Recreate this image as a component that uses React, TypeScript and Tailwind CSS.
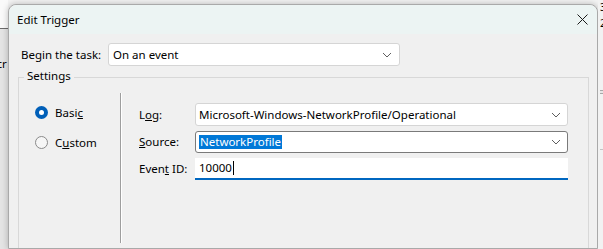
import React from "react";

function Chevron() {
  return (
    <svg width="10" height="6" viewBox="0 0 10 6" className="shrink-0">
      <path d="M1 1 L5 5 L9 1" fill="none" stroke="#5f5f5f" strokeWidth="1" />
    </svg>
  );
}

function Radio({ checked, children }: { checked?: boolean; children: React.ReactNode }) {
  return (
    <div className="flex items-center gap-[7px]">
      {checked ? (
        <span className="flex h-[13px] w-[13px] items-center justify-center rounded-full bg-[#005fb8]">
          <span className="h-[5px] w-[5px] rounded-full bg-white" />
        </span>
      ) : (
        <span className="h-[13px] w-[13px] rounded-full border border-[#8a8a8a] bg-[#f6f6f6]" />
      )}
      <span>{children}</span>
    </div>
  );
}

export default function App() {
  return (
    <div
      className="flex h-[249px] w-[603px] overflow-hidden bg-[#f3f3f3] text-[11.5px] leading-none text-black"
      style={{ fontFamily: '"Noto Sans", "Segoe UI", sans-serif' }}
    >
      {/* window behind, left edge */}
      <div className="flex w-[8px] shrink-0 flex-col">
        <div className="h-[29px] border-b border-[#6b6b6b] bg-[#fafafa]" />
        <div className="flex-1 overflow-hidden bg-[#e4e4e4] pt-[29px] whitespace-nowrap">
          <span className="-ml-[10px] inline-block">acr</span>
        </div>
      </div>

      {/* dialog */}
      <div className="mt-[4px] flex w-[590px] shrink-0 flex-col rounded-t-[8px] border border-[#a9a9a9] bg-[#f0f0f0] shadow-[0_0_6px_rgba(0,0,0,0.25)]">
        <div className="flex h-[29px] items-center justify-between rounded-t-[8px] bg-[#ecf4f3] pl-[8px] pr-[9px]">
          <span>Edit Trigger</span>
          <svg width="11" height="11" viewBox="0 0 11 11">
            <path d="M0.5 0.5 L10.5 10.5 M10.5 0.5 L0.5 10.5" stroke="#1a1a1a" strokeWidth="1" />
          </svg>
        </div>

        <div className="flex flex-1 flex-col pl-[9px] pr-[8px] pt-[9px]">
          <div className="flex items-center">
            <span className="w-[90px] pl-[3px]">Begin the task:</span>
            <div className="flex h-[23px] w-[292px] items-center justify-between rounded-[3px] border border-[#d5d5d5] bg-white pl-[4px] pr-[7px]">
              <span>On an event</span>
              <Chevron />
            </div>
          </div>

          <div className="relative mt-[11px] flex flex-1 border border-b-0 border-[#d8d8d8]">
            <span className="absolute -top-[8px] left-[5px] bg-[#f0f0f0] px-[3px]">Settings</span>

            <div className="w-[101px] shrink-0 pl-[16px] pt-[28px]">
              <div className="flex flex-col gap-[17px]">
                <Radio checked>
                  Basi<u>c</u>
                </Radio>
                <Radio>
                  C<u>u</u>stom
                </Radio>
              </div>
            </div>

            <div className="mt-[15px] mb-[5px] w-[2px] border-l border-r border-l-[#9e9e9e] border-r-white" />

            <div className="flex flex-1 flex-col gap-[5px] pl-[17px] pr-[20px] pt-[25px]">
              <div className="flex items-center">
                <span className="w-[56px]">
                  L<u>o</u>g:
                </span>
                <div className="flex h-[23px] flex-1 items-center justify-between rounded-[3px] border border-[#d5d5d5] bg-white pl-[3px] pr-[6px]">
                  <span>Microsoft-Windows-NetworkProfile/Operational</span>
                  <Chevron />
                </div>
              </div>
              <div className="flex items-center">
                <span className="w-[56px]">
                  <u>S</u>ource:
                </span>
                <div className="flex h-[22px] flex-1 items-center justify-between rounded-[3px] border border-[#7a7a7a] bg-white pl-[3px] pr-[6px]">
                  <span className="bg-[#0078d7] px-[1px] py-[1px] text-white">NetworkProfile</span>
                  <Chevron />
                </div>
              </div>
              <div className="flex items-center">
                <span className="w-[56px]">
                  Even<u>t</u> ID:
                </span>
                <div className="flex h-[22px] flex-1 items-center border-b-2 border-[#0067c0] bg-white pl-[4px]">
                  <span>10000</span>
                  <span className="ml-[1px] h-[14px] w-[1px] bg-black" />
                </div>
              </div>
            </div>
          </div>
        </div>
      </div>

      {/* window behind, right edge */}
      <div className="flex flex-1 flex-col bg-[#f2f2f2] pl-[2px] text-[11px]">
        <div className="h-[14px] overflow-hidden pt-[1px]">3</div>
        <div className="h-[17px] overflow-hidden pt-[3px]">2</div>
        <div className="h-[59px]" />
        <div className="h-[4px] border-t border-b border-[#a8a8a8] bg-[#e6e6e6]" />
        <div className="h-[55px]" />
        <div className="border-t border-[#c4c4c4]" />
      </div>
    </div>
  );
}
